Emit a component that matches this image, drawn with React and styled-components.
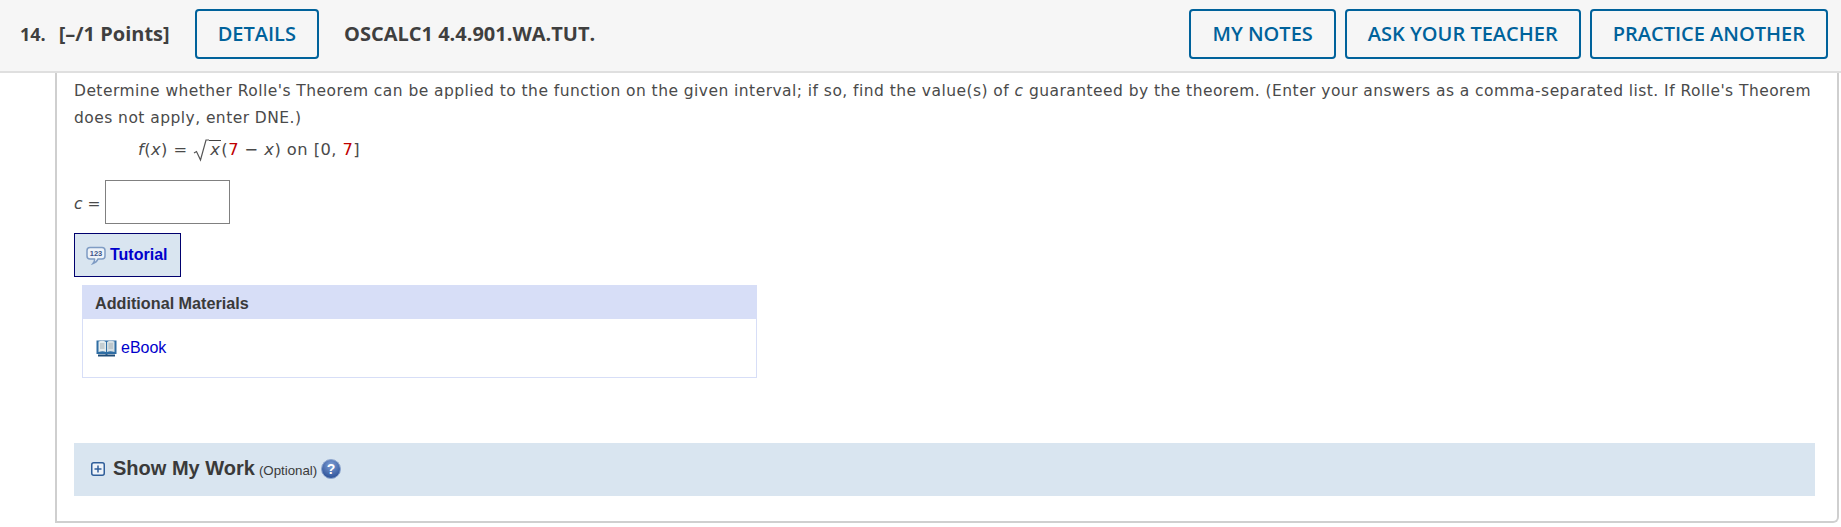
import React from "react";
import styled, { createGlobalStyle } from "styled-components";

const GlobalStyle = createGlobalStyle`
	html, body {
		margin: 0;
		padding: 0;
		background: #fff;
	}
`;

const App = () => {
	return (
		<Page>
			<GlobalStyle />
			<Header>
				<Number>14.</Number>
				<Points>[–/1 Points]</Points>
				<HeaderButton>DETAILS</HeaderButton>
				<Code>OSCALC1 4.4.901.WA.TUT.</Code>
				<HeaderActions>
					<HeaderButton>MY NOTES</HeaderButton>
					<HeaderButton>ASK YOUR TEACHER</HeaderButton>
					<HeaderButton>PRACTICE ANOTHER</HeaderButton>
				</HeaderActions>
			</Header>
			<Panel>
				<Question>
					Determine whether Rolle's Theorem can be applied to the function on the given interval; if so, find the value(s) of <i>c</i> guaranteed by the theorem. (Enter your answers as a comma-separated list. If Rolle's Theorem does not apply, enter DNE.)
				</Question>
				<Formula>
					<i>f</i>(<i>x</i>) = <Radical /><Radicand><i>x</i></Radicand>(<Given>7</Given> − <i>x</i>) on [0, <Given>7</Given>]
				</Formula>
				<AnswerRow>
					<AnswerLabel><i>c</i> =</AnswerLabel>
					<AnswerInput />
				</AnswerRow>
				<TutorialButton>
					<BubbleIcon />
					Tutorial
				</TutorialButton>
				<Materials>
					<MaterialsTitle>Additional Materials</MaterialsTitle>
					<MaterialsBody>
						<BookIcon />
						<MaterialLink>eBook</MaterialLink>
					</MaterialsBody>
				</Materials>
				<WorkBar>
					<PlusIcon />
					<WorkTitle>Show My Work</WorkTitle>
					<WorkNote>(Optional)</WorkNote>
					<HelpIcon />
				</WorkBar>
			</Panel>
		</Page>
	);
};

export default App;

const Radical = () => (
	<RadicalSvg width="16" height="24" viewBox="0 0 16 24">
		<path d="M1 15 L3.5 13.5 L7.5 22 L13 2 L16 2" fill="none" stroke="#555" strokeWidth="1.2" />
	</RadicalSvg>
);

const BubbleIcon = () => (
	<svg width="20" height="19" viewBox="0 0 20 19">
		<path d="M4 1.5 H16 Q19 1.5 19 4.5 V10 Q19 13 16 13 H12 Q11 16 7 17.5 Q9 15 8.5 13 H4 Q1 13 1 10 V4.5 Q1 1.5 4 1.5 Z" fill="#eef3f9" stroke="#7f9cc4" strokeWidth="1.5" />
		<text x="10" y="10" textAnchor="middle" fontFamily="Liberation Sans, sans-serif" fontWeight="700" fontSize="7.5" fill="#3d5488">123</text>
	</svg>
);

const BookIcon = () => (
	<svg width="21" height="18" viewBox="0 0 21 18">
		<path d="M0.5 1.5 H20.5 V15 H12 L10.5 16.5 L9 15 H0.5 Z" fill="#2f6da3" />
		<path d="M2.5 2.5 Q7 1 10 3 V13 Q7 11.5 2.5 13 Z" fill="#e4ecee" />
		<path d="M18.5 2.5 Q14 1 11 3 V13 Q14 11.5 18.5 13 Z" fill="#d5dfe3" />
		<path d="M4 5 H8.5 M4 7 H8.5 M4 9 H8.5 M12.5 5 H17 M12.5 7 H17 M12.5 9 H17" stroke="#a5b0b5" strokeWidth="1" />
		<path d="M2 15.5 H19 V17.5 H2 Z" fill="#1f4d78" />
	</svg>
);

const PlusIcon = () => (
	<svg width="14" height="14" viewBox="0 0 14 14">
		<rect x="0.75" y="0.75" width="12.5" height="12.5" rx="2" fill="#eef3f9" stroke="#2f5e9a" strokeWidth="1.5" />
		<path d="M7 3.5 V10.5 M3.5 7 H10.5" stroke="#2f5e9a" strokeWidth="1.5" />
	</svg>
);

const HelpIcon = () => (
	<HelpSvg width="20" height="20" viewBox="0 0 20 20">
		<defs>
			<radialGradient id="helpFill" cx="50%" cy="30%" r="70%">
				<stop offset="0%" stopColor="#7f9fd6" />
				<stop offset="100%" stopColor="#2a4f96" />
			</radialGradient>
		</defs>
		<circle cx="10" cy="10" r="9.5" fill="url(#helpFill)" stroke="#8ea6cf" strokeWidth="1" />
		<text x="10" y="15" textAnchor="middle" fontFamily="Liberation Sans, sans-serif" fontWeight="700" fontSize="14" fill="#fff">?</text>
	</HelpSvg>
);

const Page = styled.div`
	width: 1841px;
	height: 527px;
	overflow: hidden;
	background: #fff;
`;

const Header = styled.div`
	height: 67px;
	display: flex;
	align-items: center;
	padding: 0 13px 4px 20px;
	background: #f6f6f6;
	border-bottom: 2px solid #dfdfdf;
	font-family: "Open Sans", sans-serif;
	color: #3f3f3f;
`;

const Number = styled.span`
	font-size: 18px;
	font-weight: 700;
	margin-right: 13px;
`;

const Points = styled.span`
	font-size: 20px;
	font-weight: 700;
	margin-right: 25px;
`;

const Code = styled.span`
	font-size: 20px;
	font-weight: 700;
	margin-left: 25px;
`;

const HeaderActions = styled.div`
	display: flex;
	gap: 9px;
	margin-left: auto;
`;

const HeaderButton = styled.button`
	height: 50px;
	padding: 0 21px;
	background: transparent;
	border: 2px solid #00629b;
	border-radius: 4px;
	font-family: "Open Sans", sans-serif;
	font-size: 20px;
	font-weight: 600;
	color: #00629b;
`;

const Panel = styled.div`
	margin: 0 2px 0 55px;
	height: 450px;
	box-sizing: border-box;
	padding: 5px 22px 0 17px;
	border: 2px solid #cfcfcf;
	border-top: none;
	border-radius: 0 0 6px 0;
	font-family: "DejaVu Sans", sans-serif;
	font-size: 15.5px;
	letter-spacing: 0.45px;
	color: #4a4a4a;
`;

const Question = styled.div`
	line-height: 27px;
`;

const Formula = styled.div`
	display: flex;
	align-items: center;
	white-space: pre-wrap;
	margin: 4px 0 0 64px;
	height: 27px;
	font-size: 16.3px;
`;

const RadicalSvg = styled.svg`
	margin-top: 1px;
`;

const Radicand = styled.span`
	border-top: 1px solid #444;
	padding: 0 1px;
	line-height: 18px;
`;

const Given = styled.span`
	color: #c00000;
`;

const AnswerRow = styled.div`
	display: flex;
	align-items: center;
	margin: 17px 0 0 0;
`;

const AnswerLabel = styled.span`
	width: 31px;
	font-size: 15.5px;
	letter-spacing: 0;
	margin-top: 3px;
`;

const AnswerInput = styled.div`
	width: 125px;
	height: 44px;
	box-sizing: border-box;
	border: 1px solid #808080;
	background: #fff;
`;

const TutorialButton = styled.div`
	display: flex;
	align-items: center;
	gap: 4px;
	width: 107px;
	height: 44px;
	margin-top: 9px;
	padding-left: 11px;
	box-sizing: border-box;
	background: #d9e5f0;
	border: 1px solid #00006e;
	font-family: "Liberation Sans", sans-serif;
	font-size: 16px;
	font-weight: 700;
	letter-spacing: 0;
	color: #0000cc;
`;

const Materials = styled.div`
	width: 675px;
	height: 93px;
	margin: 8px 0 0 8px;
	box-sizing: border-box;
	border: 1px solid #d7def7;
	border-top-width: 2px;
	font-family: "Liberation Sans", sans-serif;
	letter-spacing: 0;
`;

const MaterialsTitle = styled.div`
	display: flex;
	align-items: center;
	height: 32px;
	padding-left: 12px;
	background: #d7def7;
	font-size: 16.2px;
	font-weight: 700;
	color: #3a3a3a;
`;

const MaterialsBody = styled.div`
	display: flex;
	align-items: center;
	gap: 4px;
	height: 59px;
	padding: 0 0 2px 13px;
	box-sizing: border-box;
`;

const MaterialLink = styled.span`
	font-size: 16px;
	color: #0000cc;
`;

const WorkBar = styled.div`
	display: flex;
	align-items: center;
	height: 53px;
	box-sizing: border-box;
	margin-top: 65px;
	padding: 0 0 2px 17px;
	background: #d9e5f0;
	font-family: "Liberation Sans", sans-serif;
	letter-spacing: 0;
	color: #3a3a3a;
`;

const WorkTitle = styled.span`
	margin-left: 8px;
	font-size: 20px;
	font-weight: 700;
`;

const WorkNote = styled.span`
	margin: 3px 0 0 4px;
	font-size: 13.3px;
`;

const HelpSvg = styled.svg`
	margin-left: 4px;
`;
